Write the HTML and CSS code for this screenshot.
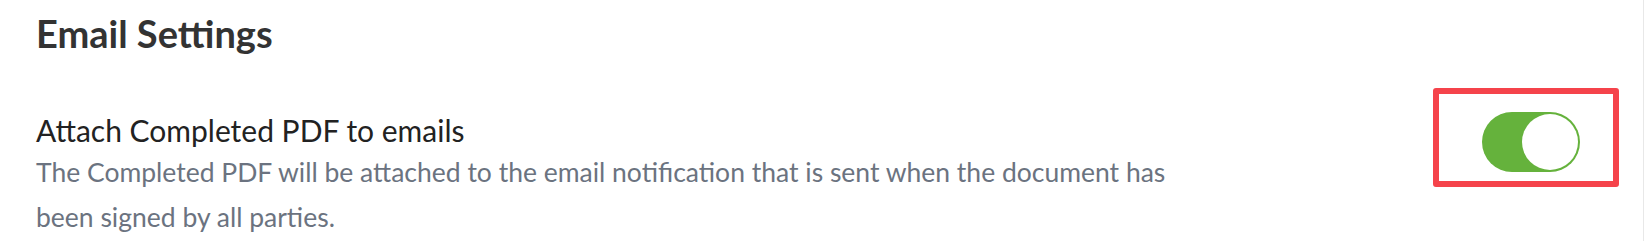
FILE: index.html
```html
<!DOCTYPE html>
<html lang="en">
<head>
    <meta charset="UTF-8">
    <title>Email Settings</title>
    <link rel="stylesheet" href="styles.css">
</head>
<body>
<div class="page">
    <h2 class="title">Email Settings</h2>
    <div class="row">
        <div class="info">
            <div class="label">Attach Completed PDF to emails</div>
            <p class="desc">The Completed PDF will be attached to the email notification that is sent when the document has been signed by all parties.</p>
        </div>
        <div class="mark">
            <span class="switch on"><span class="knob"></span></span>
        </div>
    </div>
</div>
</body>
</html>
```

FILE: styles.css
```css
*{
    margin:0;
    padding:0;
    box-sizing:border-box;
}
body{
    background:#fff;
    font-family:"Lato","Noto Sans",sans-serif;
}
.page{
    height:241px;
    padding:11px 24px 0 36px;
    border-right:1px solid #e8e8e8;
}
.title{
    font-size:38px;
    font-weight:700;
    line-height:44px;
    color:#333;
}
.row{
    display:flex;
    justify-content:space-between;
    align-items:flex-start;
    margin-top:33px;
}
.info{
    width:1160px;
    padding-top:22px;
}
.label{
    font-size:30px;
    line-height:40px;
    color:#222;
}
.desc{
    font-size:26.5px;
    line-height:45px;
    color:#6b7380;
}
.mark{
    border:6px solid #f5434b;
    border-radius:3px;
    padding:18px 33px 9px 43px;
}
.switch{
    display:block;
    width:98px;
    height:60px;
    border-radius:30px;
    background:#65b23c;
    position:relative;
}
.switch .knob{
    position:absolute;
    top:2px;
    right:2px;
    width:56px;
    height:56px;
    border-radius:50%;
    background:#fff;
}
```
